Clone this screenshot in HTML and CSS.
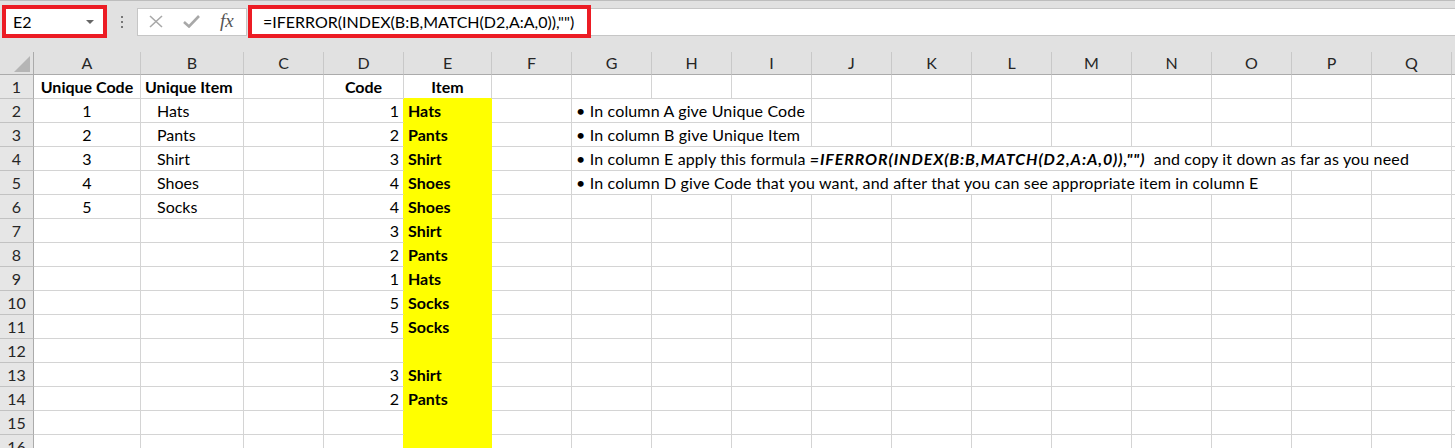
FILE: index.html
```html
<!DOCTYPE html>
<html>

<head>
    <title>INDEX MATCH</title>
    <link rel="stylesheet" href="styles.css">
</head>

<body>
    <!-- formula bar -->
    <div class="formula-bar">
        <div class="name-box">
            <span>E2</span>
            <span class="arrow"></span>
        </div>
        <svg class="grip" width="4" height="12" viewBox="0 0 4 12">
            <rect x="1" y="0" width="2" height="2" fill="#777"/>
            <rect x="1" y="5" width="2" height="2" fill="#777"/>
            <rect x="1" y="10" width="2" height="2" fill="#777"/>
        </svg>
        <div class="fx-buttons">
            <svg class="btn-x" width="14" height="13" viewBox="0 0 14 13">
                <path d="M1 1 L13 12 M13 1 L1 12" stroke="#a8a8a8" stroke-width="1.6" fill="none"/>
            </svg>
            <svg class="btn-ok" width="17" height="13" viewBox="0 0 17 13">
                <path d="M1 7 L6 11.5 L16 1" stroke="#a8a8a8" stroke-width="2.6" fill="none"/>
            </svg>
            <span class="fx">fx</span>
        </div>
        <div class="formula">=IFERROR(INDEX(B:B,MATCH(D2,A:A,0)),"")</div>
        <div class="formula-rest"></div>
    </div>

    <!-- sheet -->
    <table class="sheet">
        <colgroup>
            <col class="w-rh">
            <col class="w-a">
            <col class="w-b">
            <col class="w-std">
            <col class="w-std">
            <col class="w-e">
            <col class="w-std"><col class="w-std"><col class="w-std"><col class="w-std"><col class="w-std"><col class="w-std">
            <col class="w-std"><col class="w-std"><col class="w-std"><col class="w-std"><col class="w-std"><col class="w-std">
        </colgroup>
        <thead>
            <tr>
                <th class="corner"><span class="tri"></span></th>
                <th>A</th><th>B</th><th>C</th><th>D</th><th>E</th><th>F</th><th>G</th><th>H</th><th>I</th>
                <th>J</th><th>K</th><th>L</th><th>M</th><th>N</th><th>O</th><th>P</th><th>Q</th><th></th>
            </tr>
        </thead>
        <tbody>
            <tr>
                <td class="rh">1</td>
                <td class="bold center">Unique Code</td>
                <td class="bold">Unique Item</td>
                <td></td>
                <td class="bold center">Code</td>
                <td class="bold center top-fill">Item</td>
                <td></td><td></td><td></td><td></td><td></td><td></td><td></td><td></td><td></td><td></td><td></td><td></td><td></td>
            </tr>
            <tr>
                <td class="rh">2</td>
                <td class="center">1</td>
                <td class="indent">Hats</td>
                <td></td>
                <td class="num edge">1</td>
                <td class="bold fill">Hats</td>
                <td></td>
                <td class="note" colspan="3">&bull; In column A give Unique Code</td>
                <td></td><td></td><td></td><td></td><td></td><td></td><td></td><td></td><td></td>
            </tr>
            <tr>
                <td class="rh">3</td>
                <td class="center">2</td>
                <td class="indent">Pants</td>
                <td></td>
                <td class="num edge">2</td>
                <td class="bold fill">Pants</td>
                <td></td>
                <td class="note" colspan="3">&bull; In column B give Unique Item</td>
                <td></td><td></td><td></td><td></td><td></td><td></td><td></td><td></td><td></td>
            </tr>
            <tr>
                <td class="rh">4</td>
                <td class="center">3</td>
                <td class="indent">Shirt</td>
                <td></td>
                <td class="num edge">3</td>
                <td class="bold fill">Shirt</td>
                <td></td>
                <td class="note" colspan="11">&bull; In column E apply this formula <b class="code">=IFERROR(INDEX(B:B,MATCH(D2,A:A,0)),"")</b>&nbsp; and copy it down as far as you need</td>
                <td></td>
            </tr>
            <tr>
                <td class="rh">5</td>
                <td class="center">4</td>
                <td class="indent">Shoes</td>
                <td></td>
                <td class="num edge">4</td>
                <td class="bold fill">Shoes</td>
                <td></td>
                <td class="note" colspan="9">&bull; In column D give Code that you want, and after that you can see appropriate item in column E</td>
                <td></td><td></td><td></td>
            </tr>
            <tr>
                <td class="rh">6</td>
                <td class="center">5</td>
                <td class="indent">Socks</td>
                <td></td>
                <td class="num edge">4</td>
                <td class="bold fill">Shoes</td>
                <td></td><td></td><td></td><td></td><td></td><td></td><td></td><td></td><td></td><td></td><td></td><td></td><td></td>
            </tr>
            <tr>
                <td class="rh">7</td>
                <td></td><td></td><td></td>
                <td class="num edge">3</td>
                <td class="bold fill">Shirt</td>
                <td></td><td></td><td></td><td></td><td></td><td></td><td></td><td></td><td></td><td></td><td></td><td></td><td></td>
            </tr>
            <tr>
                <td class="rh">8</td>
                <td></td><td></td><td></td>
                <td class="num edge">2</td>
                <td class="bold fill">Pants</td>
                <td></td><td></td><td></td><td></td><td></td><td></td><td></td><td></td><td></td><td></td><td></td><td></td><td></td>
            </tr>
            <tr>
                <td class="rh">9</td>
                <td></td><td></td><td></td>
                <td class="num edge">1</td>
                <td class="bold fill">Hats</td>
                <td></td><td></td><td></td><td></td><td></td><td></td><td></td><td></td><td></td><td></td><td></td><td></td><td></td>
            </tr>
            <tr>
                <td class="rh">10</td>
                <td></td><td></td><td></td>
                <td class="num edge">5</td>
                <td class="bold fill">Socks</td>
                <td></td><td></td><td></td><td></td><td></td><td></td><td></td><td></td><td></td><td></td><td></td><td></td><td></td>
            </tr>
            <tr>
                <td class="rh">11</td>
                <td></td><td></td><td></td>
                <td class="num edge">5</td>
                <td class="bold fill">Socks</td>
                <td></td><td></td><td></td><td></td><td></td><td></td><td></td><td></td><td></td><td></td><td></td><td></td><td></td>
            </tr>
            <tr>
                <td class="rh">12</td>
                <td></td><td></td><td></td>
                <td class="num edge"></td>
                <td class="bold fill"></td>
                <td></td><td></td><td></td><td></td><td></td><td></td><td></td><td></td><td></td><td></td><td></td><td></td><td></td>
            </tr>
            <tr>
                <td class="rh">13</td>
                <td></td><td></td><td></td>
                <td class="num edge">3</td>
                <td class="bold fill">Shirt</td>
                <td></td><td></td><td></td><td></td><td></td><td></td><td></td><td></td><td></td><td></td><td></td><td></td><td></td>
            </tr>
            <tr>
                <td class="rh">14</td>
                <td></td><td></td><td></td>
                <td class="num edge">2</td>
                <td class="bold fill">Pants</td>
                <td></td><td></td><td></td><td></td><td></td><td></td><td></td><td></td><td></td><td></td><td></td><td></td><td></td>
            </tr>
            <tr>
                <td class="rh">15</td>
                <td></td><td></td><td></td>
                <td class="num edge"></td>
                <td class="bold fill"></td>
                <td></td><td></td><td></td><td></td><td></td><td></td><td></td><td></td><td></td><td></td><td></td><td></td><td></td>
            </tr>
            <tr>
                <td class="rh">16</td>
                <td></td><td></td><td></td>
                <td class="num edge"></td>
                <td class="bold fill"></td>
                <td></td><td></td><td></td><td></td><td></td><td></td><td></td><td></td><td></td><td></td><td></td><td></td><td></td>
            </tr>
        </tbody>
    </table>
</body>

</html>
```

FILE: styles.css
```css
html,
body {
    margin: 0;
    overflow: hidden;
    background-color: #fff;
}

body {
    font-family: Lato, "Liberation Sans", sans-serif;
    font-size: 16px;
    color: #000;
}

/* formula bar */
.formula-bar {
    display: flex;
    align-items: center;
    height: 52px;
    padding-bottom: 10px; /* gap above the column headers */
    box-sizing: border-box;
    background-color: #e1e1e1;
    border-top: 1px solid #bdbdbd;
}

.name-box {
    display: flex;
    align-items: center;
    justify-content: space-between;
    width: 105px;
    height: 33px;
    margin-left: 2px;
    padding: 0 9px 0 7px;
    box-sizing: border-box;
    background-color: #fff;
    border: 4px solid #ec1c24;
}

.name-box .arrow {
    width: 0;
    height: 0;
    border-left: 4px solid transparent;
    border-right: 4px solid transparent;
    border-top: 4px solid #666;
}

.grip {
    margin: 0 13px 0 13px;
}

.fx-buttons {
    display: flex;
    align-items: center;
    width: 110px;
    height: 28px;
    box-sizing: border-box;
    padding-left: 11px;
    background-color: #fff;
    border: 1px solid #c6c6c6;
}

.btn-x {
    margin-right: 20px;
}

.btn-ok {
    margin-right: 20px;
}

.fx {
    font-family: "Liberation Serif", serif;
    font-style: italic;
    font-size: 19px;
    color: #555;
    margin-top: -2px;
}

.formula {
    display: flex;
    align-items: center;
    width: 343px;
    height: 33px;
    margin-left: 1px;
    padding-left: 11px;
    box-sizing: border-box;
    background-color: #fff;
    border: 4px solid #ec1c24;
    white-space: nowrap;
}

.formula-rest {
    flex: 1;
    height: 28px;
    box-sizing: border-box;
    background-color: #fff;
    border-top: 1px solid #c6c6c6;
    border-bottom: 1px solid #c6c6c6;
}

/* grid */
.sheet {
    table-layout: fixed;
    border-collapse: separate;
    border-spacing: 0;
    width: 1532px;
}

.w-rh { width: 34px; }
.w-a { width: 107px; }
.w-b { width: 103px; }
.w-e { width: 88px; }
.w-std { width: 80px; }

.sheet th {
    height: 23px;
    box-sizing: border-box;
    padding: 0 0 2px 0;
    vertical-align: bottom;
    line-height: 18px;
    font-weight: normal;
    font-size: 16px;
    color: #262626;
    background-color: #e1e1e1;
    border-right: 1px solid #c8c8c8;
    border-bottom: 1px solid #ababab;
}

.sheet th.corner {
    text-align: right;
    padding: 0 3px 2px 0;
    border-right-color: #ababab;
}

.tri {
    display: inline-block;
    width: 0;
    height: 0;
    border-left: 16px solid transparent;
    border-bottom: 16px solid #b5b5b5;
    vertical-align: bottom;
}

.sheet td {
    height: 24px;
    box-sizing: border-box;
    padding: 0 4px 2px 4px;
    vertical-align: bottom;
    line-height: 18px;
    white-space: nowrap;
    border-right: 1px solid #d4d4d4;
    border-bottom: 1px solid #d4d4d4;
}

.sheet td.rh {
    text-align: center;
    padding: 0 0 2px 0;
    color: #262626;
    background-color: #e6e6e6;
    border-right-color: #ababab;
    border-bottom-color: #c2c2c2;
}

.bold {
    font-weight: bold;
}

.center {
    text-align: center;
}

.indent {
    padding-left: 16px !important;
}

.num {
    text-align: right;
    padding-right: 4px;
}

.edge {
    border-right-color: #ff0 !important;
}

.fill {
    background-color: #ff0;
    border-right-color: #ff0 !important;
    border-bottom-color: #ff0 !important;
}

.top-fill {
    border-bottom-color: #ff0 !important;
}

.note {
    overflow: visible;
    letter-spacing: 0.15px;
}

.note .code {
    font-style: italic;
    letter-spacing: 0.9px;
}
```
